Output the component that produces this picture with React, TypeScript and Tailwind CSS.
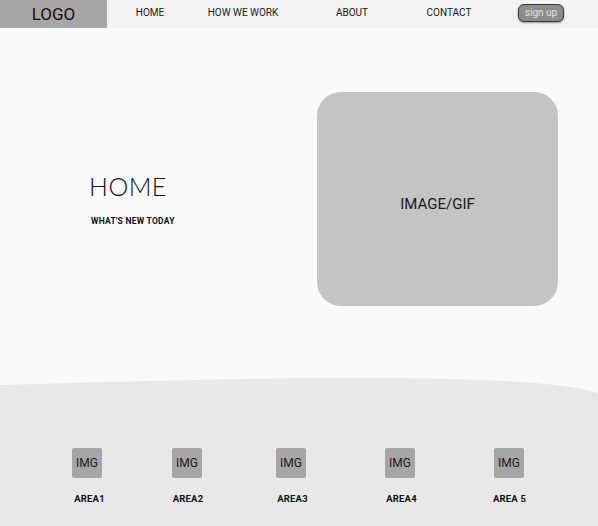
import React from "react";

const navItems = [
  { label: "HOME", w: "w-[86px]" },
  { label: "HOW WE WORK", w: "w-[100px]" },
  { label: "ABOUT", w: "w-[118px]" },
  { label: "CONTACT", w: "w-[76px]" },
];

const areas = [
  { label: "AREA1", ml: "ml-[57px]", lp: "pl-[5px]" },
  { label: "AREA2", ml: "ml-[40px]", lp: "pl-[2px]" },
  { label: "AREA3", ml: "ml-[44px]", lp: "pl-[3px]" },
  { label: "AREA4", ml: "ml-[49px]", lp: "pl-[3px]" },
  { label: "AREA 5", ml: "ml-[49px]", lp: "pl-[1px]" },
];

export default function App() {
  return (
    <div
      className="w-[598px] h-[526px] overflow-hidden bg-[#fafafa] flex flex-col"
      style={{ fontFamily: "Roboto, 'Liberation Sans', sans-serif" }}
    >
      {/* Header */}
      <header className="h-[28px] flex bg-[#f2f2f2] shrink-0">
        <div className="w-[107px] h-full bg-[#a6a6a6] flex items-center justify-center text-[17px] text-[#111] leading-none">
          LOGO
        </div>
        {navItems.map((n) => (
          <div
            key={n.label}
            className={`${n.w} h-full flex items-center justify-center text-[10px] text-[#1a1a1a] leading-none pb-[2px]`}
          >
            {n.label}
          </div>
        ))}
        <div className="w-[108px] h-full flex items-center justify-center pb-[2px]">
          <button className="w-[46px] h-[18px] rounded-[6px] bg-[#8c8c8c] border border-[#3a3a3a] shadow-[0_1px_2px_rgba(0,0,0,0.4)] text-[10px] text-[#e4e4e4] leading-none flex items-center justify-center">
            sign up
          </button>
        </div>
      </header>

      {/* Hero */}
      <section className="h-[350px] shrink-0 flex pt-[64px]">
        <div className="w-[317px] pl-[89px] flex flex-col pt-[82px]">
          <h1
            className="text-[25px] font-light leading-none text-[#111] tracking-[0.5px]"
            style={{ fontFamily: "Lato, 'Open Sans', sans-serif" }}
          >
            HOME
          </h1>
          <p className="mt-[18px] ml-[2px] text-[8.5px] font-bold text-[#111] leading-none tracking-[0.25px]">
            WHAT&apos;S NEW TODAY
          </p>
        </div>
        <div className="w-[241px] h-[214px] rounded-[24px] bg-[#c4c4c4] flex items-center justify-center text-[15px] text-[#1a1a1a] pt-[10px]">
          IMAGE/GIF
        </div>
      </section>

      {/* Footer */}
      <section className="flex-1 flex flex-col">
        <svg width="598" height="16" viewBox="0 0 598 16" className="block shrink-0">
          <path
            d="M0 7 C 150 3, 250 0, 350 0 C 480 0, 565 4, 598 15 L598 16 L0 16 Z"
            fill="#e8e8e8"
          />
        </svg>
        <div className="flex-1 bg-[#e8e8e8] flex pt-[54px]">
          {areas.map((a) => (
            <div key={a.label} className={`${a.ml} w-[60px] flex flex-col items-center`}>
              <div className="w-[30px] h-[30px] rounded-[2px] bg-[#a6a6a6] flex items-center justify-center text-[12px] text-[#1a1a1a]">
                IMG
              </div>
              <div className={`${a.lp} mt-[16px] text-[9.5px] font-bold text-[#111] leading-none tracking-[0.2px]`}>
                {a.label}
              </div>
            </div>
          ))}
        </div>
      </section>
    </div>
  );
}
